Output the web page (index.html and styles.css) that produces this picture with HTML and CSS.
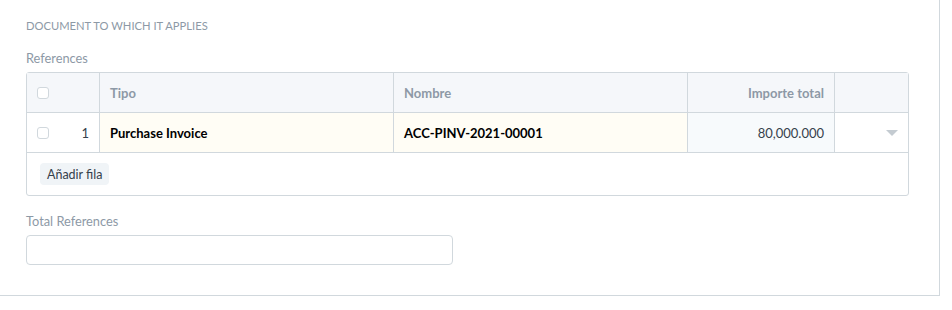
FILE: index.html
```html
<!DOCTYPE html>
<html lang="es">
<head>
    <meta charset="UTF-8">
    <title>Document to which it applies</title>
    <link rel="stylesheet" href="styles.css">
</head>
<body>
    <div class="form-section">
        <div class="section-head">DOCUMENT TO WHICH IT APPLIES</div>

        <label class="control-label">References</label>
        <div class="grid">
            <div class="grid-row grid-heading">
                <div class="col col-check"><span class="checkbox"></span></div>
                <div class="col">Tipo</div>
                <div class="col">Nombre</div>
                <div class="col text-right">Importe total</div>
                <div class="col"></div>
            </div>
            <div class="grid-row">
                <div class="col col-check"><span class="checkbox"></span><span class="row-index">1</span></div>
                <div class="col editable bold">Purchase Invoice</div>
                <div class="col editable bold">ACC-PINV-2021-00001</div>
                <div class="col readonly text-right">80,000.000</div>
                <div class="col col-caret"><span class="caret"></span></div>
            </div>
            <div class="grid-footer">
                <button class="btn-add">Añadir fila</button>
            </div>
        </div>

        <label class="control-label total-label">Total References</label>
        <input type="text" class="control-input">
    </div>
</body>
</html>
```

FILE: styles.css
```css
body {
    margin: 0;
    font-family: 'Lato', 'Liberation Sans', sans-serif;
    background-color: #fff;
    color: #36414c;
}
.form-section {
    width: 940px;
    box-sizing: border-box;
    padding: 18px 30px 30px 26px;
    border-right: 1px solid #d1d8dd;
    border-bottom: 1px solid #d1d8dd;
}
.section-head {
    font-size: 11.2px;
    line-height: 16px;
    color: #8d99a6;
    margin-bottom: 15px;
}
.control-label {
    display: block;
    font-size: 12.8px;
    line-height: 18px;
    color: #8d99a6;
    margin-bottom: 5px;
}
.total-label {
    margin-top: 16px;
}

/* Grid table */
.grid {
    width: 883px;
    box-sizing: border-box;
    border: 1px solid #d1d8dd;
    border-radius: 3px;
    font-size: 13px;
}
.grid-row {
    display: grid;
    grid-template-columns: 72px 294px 294px 147px 74px;
    height: 40px;
    border-bottom: 1px solid #d1d8dd;
    box-sizing: border-box;
}
.grid-heading {
    background-color: #f5f7fa;
    color: #8d99a6;
    font-weight: bold;
}
.col {
    display: flex;
    align-items: center;
    padding: 0 10px;
    border-left: 1px solid #d1d8dd;
    box-sizing: border-box;
}
.col-check {
    border-left: none;
    justify-content: space-between;
    padding: 0 10px 0 10px;
}
.text-right {
    justify-content: flex-end;
}
.editable {
    background-color: #fffdf5;
}
.readonly {
    background-color: #f7fafc;
    color: #36414c;
}
.bold {
    font-weight: bold;
    color: #000;
}
.checkbox {
    width: 10px;
    height: 10px;
    border: 1px solid #d1d8dd;
    border-radius: 3px;
    background-color: #fff;
}
.row-index {
    color: #36414c;
}
.col-caret {
    justify-content: flex-end;
}
.caret {
    width: 0;
    height: 0;
    border-left: 6px solid transparent;
    border-right: 6px solid transparent;
    border-top: 6px solid #c4cbd1;
}
.grid-footer {
    height: 42px;
    padding: 10px 13px;
    box-sizing: border-box;
}
.btn-add {
    font-family: inherit;
    font-size: 12.5px;
    height: 22px;
    padding: 0 7px;
    border: none;
    border-radius: 4px;
    background-color: #f0f4f7;
    color: #36414c;
}
.control-input {
    display: block;
    width: 427px;
    height: 30px;
    box-sizing: border-box;
    border: 1px solid #d1d8dd;
    border-radius: 4px;
    background-color: #fff;
}
```
